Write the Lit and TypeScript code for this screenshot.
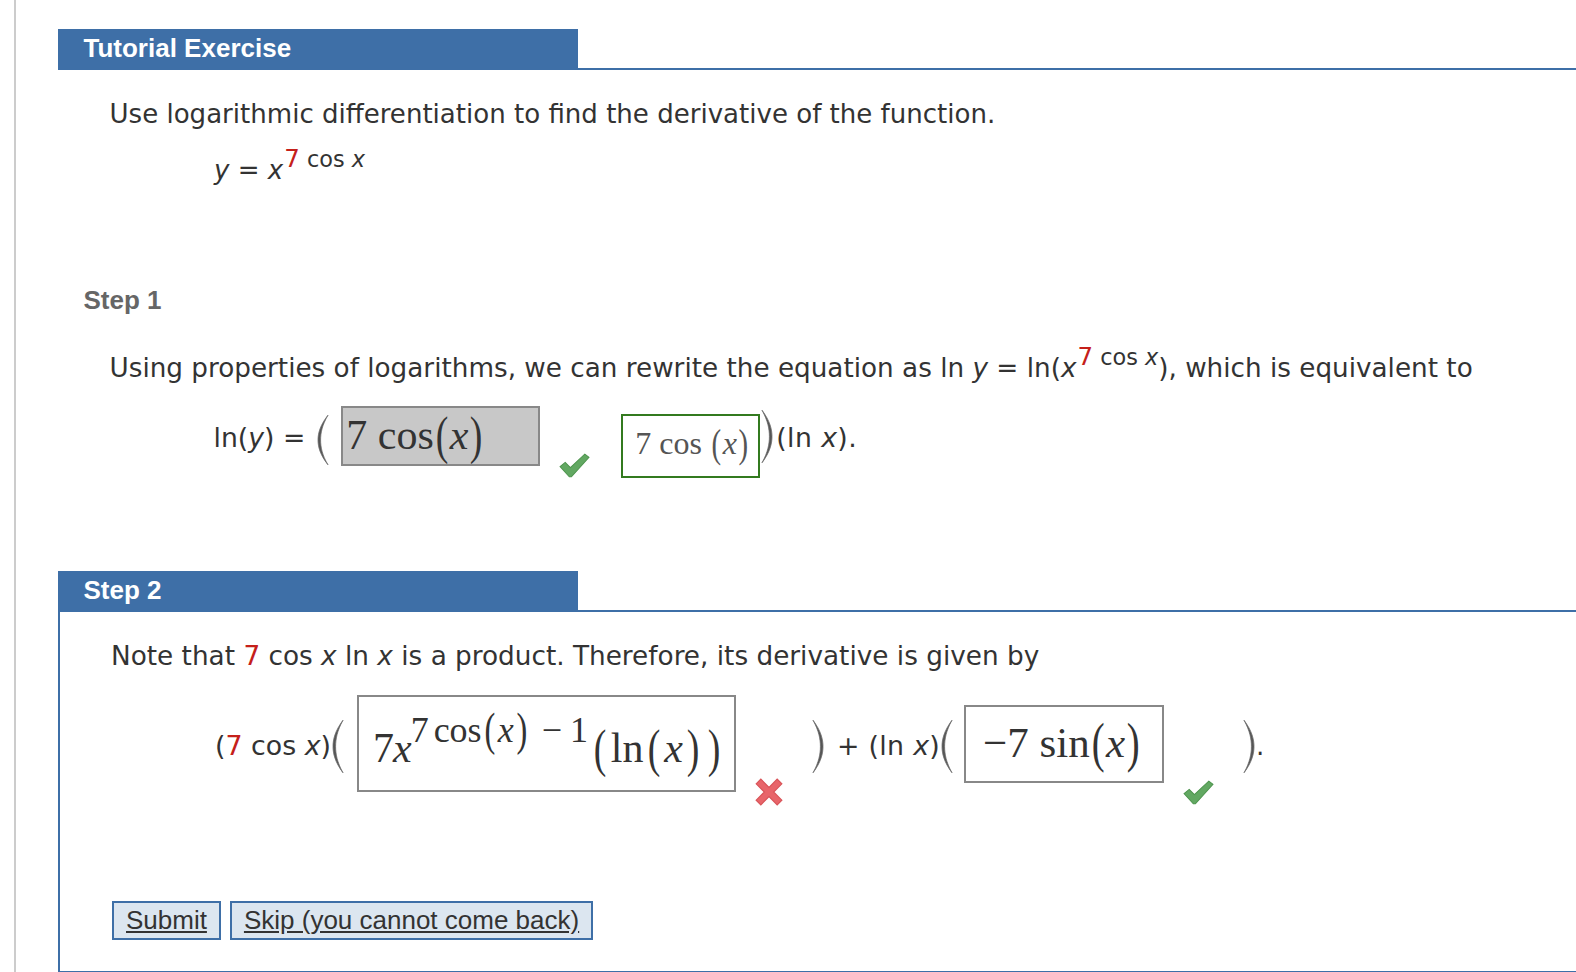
import { LitElement, html, css, svg } from "lit";
import { customElement } from "lit/decorators.js";

const paren = (h: number, flip = false) => html`<svg class="paren" width="14" height=${h} viewBox="0 0 14 46" preserveAspectRatio="none" style=${flip ? "transform:scaleX(-1)" : ""}>
  <path d="M12 1C4 10 2 17 2 23C2 29 4 36 12 45C6 36 4.6 29 4.6 23C4.6 17 6 10 12 1Z" fill="#555" stroke="#6a6a6a" stroke-width=".7"/></svg>`;

const check = html`<svg class="mark" width="33" height="27" viewBox="0 0 32 26">
  <path d="M2 14L7 10L12 15L26 2L30 5L13 24L11 24Z" fill="#62a862" stroke="#4d944d" stroke-width="1"/></svg>`;
const cross = html`<svg class="mark" width="28" height="28" viewBox="2 2 24 24">
  ${svg`<path d="M3 7L7 3L14 10L21 3L25 7L18 14L25 21L21 25L14 18L7 25L3 21L10 14Z" fill="#e8656a" stroke="#d95459" stroke-width="1"/>`}</svg>`;

@customElement("app-root")
export class AppRoot extends LitElement {
  static styles = css`
    :host { display: block; width: 1576px; height: 972px; overflow: hidden; background: #fff; color: #333;
      font-family: "DejaVu Sans", sans-serif; font-size: 26.05px; }
    .page { box-sizing: border-box; height: 972px; margin-left: 14px; border-left: 2px solid #ccc; padding: 29px 0 0 42px; }
    .bar { height: 39px; box-sizing: content-box; border-bottom: 2px solid #3e6fa7; }
    .bar span { display: flex; align-items: center; box-sizing: border-box; width: 520px; height: 41px; padding: 0 0 2px 25.5px;
      background: #3e6fa7; color: #fff; font: bold 26px "Liberation Sans", sans-serif; }
    .intro { padding: 28px 0 0 51.5px; line-height: 32px; white-space: nowrap; }
    .eq { padding: 20px 0 0 156px; line-height: 40px; display: flex; white-space: nowrap; }
    sup { font-size: 22.4px; line-height: 0; vertical-align: baseline; position: relative; top: -12px; }
    sup .r { font-size: 24.5px; margin-left: 1px; }
    .r { color: #c5201a; }
    .step1 { padding: 95px 0 0 25.5px; font: bold 26px/30px "Liberation Sans", sans-serif; color: #666; }
    .t2 { padding: 35px 0 0 51.5px; line-height: 36px; white-space: nowrap; font-size: 26.25px; }
    .row { display: flex; white-space: nowrap; align-items: flex-start; }
    .r1 { padding: 20px 0 0 155.5px; height: 165px; box-sizing: content-box; font-size: 26.7px; }
    .lab { line-height: 30px; }
    .wide { letter-spacing: .4px; }
    .paren { display: block; flex: none; }
    .mark { display: block; flex: none; }
    .m { font-family: "Liberation Serif", serif; color: #333; }
    .p { display: inline-block; transform: scale(.9, 1.28); margin: 0 1px; font-weight: 400; }
    .box1 { box-sizing: border-box; width: 199px; height: 60px; background: #c8c8c8; border: 2px solid #888; font-size: 42px; line-height: 54px; padding-left: 3px; }
    .box2 { box-sizing: border-box; width: 139px; height: 64px; border: 2px solid #337a1f; font-size: 32px; line-height: 54px; padding-left: 12px; color: #555; }
    .step2 { box-sizing: border-box; border: 2px solid #3e6fa7; border-top: 0; border-right: 0; height: 361px; padding: 27px 0 0 51px; }
    .t3 { line-height: 34px; white-space: nowrap; font-size: 26.3px; }
    .r2 { padding-top: 22px; padding-left: 104px; height: 206px; box-sizing: content-box; }
    .small { font-size: 26.8px; }
    .box3 { box-sizing: border-box; width: 379px; height: 97px; border: 2px solid #888; font-size: 42px; padding: 28px 0 0 14px; line-height: 46px; }
    .base { letter-spacing: -1px; }
    .box3 .up { font-size: 36px; position: relative; top: -20px; margin-right: 2px; }
    .box3 .up .p { margin: 0 2px; }
    .seven { margin-right: 5px; }
    .minus { margin: 0 8px 0 12px; }
    .box3 .big { margin: 0 3.4px; }
    .box4 { box-sizing: border-box; width: 200px; height: 78px; border: 2px solid #888; font-size: 43px; line-height: 72px; padding-left: 17px; }
    .btns { display: flex; gap: 9px; margin-left: 1px; }
    .btn { box-sizing: border-box; height: 39px; border: 2px solid #3e6fa7; background: #dce6f0; padding: 0 12px; color: #333;
      font: 26px/35px "Liberation Sans", sans-serif; text-decoration: underline; white-space: nowrap; }
    i { font-style: italic; }
  `;
  render() {
    return html`<div class="page">
      <div class="bar"><span>Tutorial Exercise</span></div>
      <div class="intro">Use logarithmic differentiation to find the derivative of the function.</div>
      <div class="eq"><span><i>y</i> = <i>x</i><sup><span class="r">7</span> cos <i>x</i></sup></span></div>
      <div class="step1">Step 1</div>
      <div class="t2">Using properties of logarithms, we can rewrite the equation as ln <i>y</i> = ln(<i>x</i><sup><span class="r">7</span> cos <i>x</i></sup>), which is equivalent to</div>
      <div class="row r1">
        <span class="lab" style="margin-top:17px">ln(<i>y</i>) =</span>
        <span style="margin:8px 0 0 11px">${paren(52)}</span>
        <div class="m box1" style="margin-left:11px">7 cos<span class="p">(</span><i>x</i><span class="p">)</span></div>
        <span style="margin:46px 0 0 18px">${check}</span>
        <div class="m box2" style="margin:8px 0 0 30px">7 cos <span class="p">(</span><i>x</i><span class="p">)</span></div>
        <span style="margin:3px 0 0 0">${paren(55, true)}</span>
        <span class="lab wide" style="margin:17px 0 0 2px">(ln <i>x</i>).</span>
      </div>
      <div class="bar"><span>Step 2</span></div>
      <div class="step2">
        <div class="t3">Note that <span class="r">7</span> cos <i>x</i> ln <i>x</i> is a product. Therefore, its derivative is given by</div>
        <div class="row r2">
          <span class="lab small" style="margin-top:36px">(<span class="r">7</span> cos <i>x</i>)</span>
          <span style="margin:24px 0 0 0">${paren(55)}</span>
          <div class="m box3" style="margin-left:12px"><span class="base">7<i>x</i></span><span class="up"><span class="seven">7</span>cos<span class="p">(</span><i>x</i><span class="p">)</span><span class="minus">−</span>1</span><span class="p big">(</span>ln<span class="p big">(</span><i>x</i><span class="p big">)</span><span class="p big">)</span></div>
          <span style="margin:83px 0 0 19px">${cross}</span>
          <span style="margin:24px 0 0 28px">${paren(55, true)}</span>
          <span class="lab small" style="margin:36px 0 0 12px;letter-spacing:.3px">+ (ln <i>x</i>)</span>
          <span style="margin:24px 0 0 0">${paren(55)}</span>
          <div class="m box4" style="margin:10px 0 0 10px">−7 sin<span class="p">(</span><i>x</i><span class="p">)</span></div>
          <span style="margin:84px 0 0 18px">${check}</span>
          <span style="margin:24px 0 0 27px">${paren(55, true)}</span>
          <span class="lab" style="margin-top:36px">.</span>
        </div>
        <div class="btns"><span class="btn">Submit</span><span class="btn">Skip (you cannot come back)</span></div>
      </div>
    </div>`;
  }
}
